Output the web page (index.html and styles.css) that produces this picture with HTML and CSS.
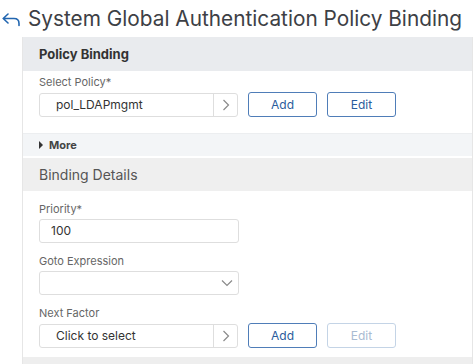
FILE: index.html
```html
<!DOCTYPE html>
<html lang="en">
<head>
    <meta charset="UTF-8">
    <meta name="viewport" content="width=device-width, initial-scale=1.0">
    <title>System Global Authentication Policy Binding</title>
    <link rel="stylesheet" href="styles.css">
</head>
<body>
    <div class="title-row">
        <svg class="back-icon" width="18" height="14" viewBox="0 0 18 14">
            <path d="M6 1 L1.2 5.5 L6 10 M1.2 5.5 H12 Q17 5.5 17 10.5 V12.5" fill="none" stroke="#2266b0" stroke-width="1.6" stroke-linecap="round" stroke-linejoin="round"/>
        </svg>
        <h1>System Global Authentication Policy Binding</h1>
    </div>

    <div class="panel">
        <!-- Policy Binding -->
        <div class="panel-head">Policy Binding</div>
        <div class="panel-body first">
            <div class="field">
                <label>Select Policy*</label>
                <div class="row">
                    <div class="picker">
                        <span class="picker-value">pol_LDAPmgmt</span>
                        <span class="picker-btn">
                            <svg width="8" height="12" viewBox="0 0 8 12"><path d="M1.5 1 L6.5 6 L1.5 11" fill="none" stroke="#8a8a8a" stroke-width="1.2"/></svg>
                        </span>
                    </div>
                    <button class="btn">Add</button>
                    <button class="btn">Edit</button>
                </div>
            </div>
        </div>

        <div class="more"><span class="caret"></span>More</div>

        <!-- Binding Details -->
        <div class="section-head">Binding Details</div>
        <div class="panel-body">
            <div class="field">
                <label>Priority*</label>
                <div class="text-input">100</div>
            </div>
            <div class="field">
                <label>Goto Expression</label>
                <div class="text-input select">
                    <svg width="12" height="8" viewBox="0 0 12 8"><path d="M1 1.5 L6 6.5 L11 1.5" fill="none" stroke="#8a8a8a" stroke-width="1.2"/></svg>
                </div>
            </div>
            <div class="field">
                <label>Next Factor</label>
                <div class="row">
                    <div class="picker">
                        <span class="picker-value">Click to select</span>
                        <span class="picker-btn">
                            <svg width="8" height="12" viewBox="0 0 8 12"><path d="M1.5 1 L6.5 6 L1.5 11" fill="none" stroke="#8a8a8a" stroke-width="1.2"/></svg>
                        </span>
                    </div>
                    <button class="btn">Add</button>
                    <button class="btn disabled">Edit</button>
                </div>
            </div>
        </div>
        <div class="panel-foot"></div>
    </div>
</body>
</html>
```

FILE: styles.css
```css
body {
    font-family: Inter, "Noto Sans", sans-serif;
    background-color: #fff;
    margin: 0;
    padding: 0;
    color: #333;
    height: 364px;
    overflow: hidden;
}

.title-row {
    display: flex;
    align-items: center;
    height: 37px;
}

.back-icon {
    margin: 3px 0 0 2px;
}

h1 {
    margin: 0 0 0 8px;
    font-size: 20.8px;
    font-weight: 400;
    color: #3d4045;
    white-space: nowrap;
}

.panel {
    margin-left: 22px;
    margin-right: 1px;
    border-left: 1px solid #e6e6e6;
    border-right: 1px solid #e6e6e6;
}

.panel-head {
    background: #e9ebee;
    height: 34px;
    line-height: 34px;
    padding-left: 16px;
    font-size: 13px;
    font-weight: 700;
    color: #333;
}

.panel-body {
    padding: 11px 16px 9px;
}

.panel-body.first {
    padding: 4px 16px 16px;
}

.field {
    margin-bottom: 11px;
}

.field:last-child {
    margin-bottom: 0;
}

label {
    display: block;
    font-size: 11px;
    line-height: 14px;
    color: #666;
    margin-bottom: 3px;
}

.row {
    display: flex;
    align-items: center;
}

.picker {
    display: flex;
    width: 199px;
    height: 24px;
    border: 1px solid #dedede;
    border-radius: 3px;
    box-sizing: border-box;
}

.picker-value {
    flex: 1;
    padding-left: 16px;
    font-size: 12px;
    line-height: 22px;
    color: #333;
}

.picker-btn {
    width: 23px;
    border-left: 1px solid #dedede;
    display: flex;
    align-items: center;
    justify-content: center;
}

.btn {
    width: 69px;
    height: 25px;
    margin-left: 10px;
    background: #fff;
    border: 1px solid #4f7db8;
    border-radius: 3px;
    font-family: Inter, "Noto Sans", sans-serif;
    font-size: 12px;
    color: #2b5c9c;
    padding: 0;
}

.btn.disabled {
    border-color: #c4d4e6;
    color: #a9bbd2;
}

.more {
    display: flex;
    align-items: center;
    height: 22px;
    background: #f3f5f7;
    border-top: 1px solid #eceef0;
    padding-left: 16px;
    font-size: 11px;
    font-weight: 700;
    color: #444;
    margin-bottom: 2px;
}

.caret {
    width: 0;
    height: 0;
    border-top: 4px solid transparent;
    border-bottom: 4px solid transparent;
    border-left: 4px solid #333;
    margin-right: 6px;
}

.section-head {
    background: #efefef;
    height: 33px;
    line-height: 33px;
    padding-left: 16px;
    font-size: 14px;
    color: #555;
}

.text-input {
    width: 200px;
    height: 24px;
    box-sizing: border-box;
    padding-left: 11px;
    border: 1px solid #dedede;
    border-radius: 3px;
    font-size: 12px;
    line-height: 22px;
    color: #333;
}

.text-input.select {
    display: flex;
    align-items: center;
    justify-content: flex-end;
    padding-right: 5px;
    padding-left: 0;
}

.panel-foot {
    height: 7px;
    background: #eeeeee;
    border-bottom: 1px solid #cfcfcf;
}
```
